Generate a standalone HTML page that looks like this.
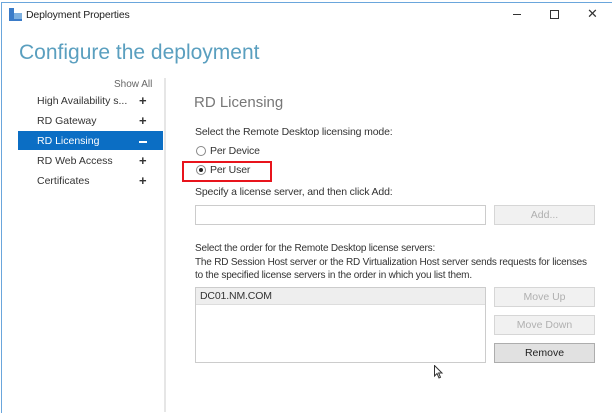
<!DOCTYPE html>
<html><head><meta charset="utf-8"><style>
body{margin:0;width:612px;height:416px;background:#fff;font-family:"Liberation Sans",sans-serif;overflow:hidden;position:relative;color:#333}
.a{position:absolute;white-space:nowrap}
.t{font-size:10.5px;letter-spacing:-0.15px}
.btn{position:absolute;width:99px;height:18px;border:1px solid #d6d6d6;background:#f1f1f1;color:#b0b0b0;font-size:10.5px;text-align:center;line-height:18px}
.nav{font-size:10.5px;color:#333}
</style></head><body>
<div class="a" style="left:1px;top:2px;width:611px;height:410px;border-left:1px solid #6aa6dc;border-top:1px solid #6aa6dc"></div>
<svg class="a" style="left:9px;top:8px" width="14" height="13"><rect x="0" y="0" width="5" height="11" fill="#3a7bc8"/><rect x="5" y="5" width="8" height="6" fill="#7db0e0"/><rect x="0" y="11" width="13" height="2" fill="#3a7bc8"/></svg>
<div class="a t" style="left:26px;top:9px;color:#222">Deployment Properties</div>
<div class="a" style="left:513px;top:14px;width:8px;height:1px;background:#333"></div>
<div class="a" style="left:550px;top:10px;width:7px;height:7px;border:1px solid #333"></div>
<div class="a" style="left:587px;top:6px;font-size:13px;color:#333">✕</div>
<div class="a" style="left:19px;top:41px;font-size:21px;color:#5a9fbf">Configure the deployment</div>
<div class="a" style="left:164px;top:78px;width:2px;height:334px;background:#e6e6e6"></div>
<div class="a" style="left:114px;top:79px;font-size:10px;color:#666">Show All</div>
<div class="a" style="left:18px;top:131px;width:145px;height:19px;background:#0b6ec4"></div>
<div class="a nav" style="left:37px;top:95px">High Availability s...</div><div class="a nav" style="left:139px;top:93px;font-size:13px;font-weight:bold">+</div>
<div class="a nav" style="left:37px;top:115px">RD Gateway</div><div class="a nav" style="left:139px;top:113px;font-size:13px;font-weight:bold">+</div>
<div class="a nav" style="left:37px;top:135px;color:#fff">RD Licensing</div><div class="a" style="left:139px;top:141px;width:8px;height:2px;background:#fff"></div>
<div class="a nav" style="left:37px;top:155px">RD Web Access</div><div class="a nav" style="left:139px;top:153px;font-size:13px;font-weight:bold">+</div>
<div class="a nav" style="left:37px;top:175px">Certificates</div><div class="a nav" style="left:139px;top:173px;font-size:13px;font-weight:bold">+</div>
<div class="a" style="left:194px;top:94px;font-size:15px;color:#777">RD Licensing</div>
<div class="a t" style="left:195px;top:126px">Select the Remote Desktop licensing mode:</div>
<div class="a" style="left:196px;top:146px;width:8px;height:8px;border:1px solid #888;border-radius:50%"></div>
<div class="a t" style="left:210px;top:145px">Per Device</div>
<div class="a" style="left:196px;top:165px;width:8px;height:8px;border:1px solid #888;border-radius:50%"></div>
<div class="a" style="left:199px;top:168px;width:4px;height:4px;background:#222;border-radius:50%"></div>
<div class="a t" style="left:210px;top:164px">Per User</div>
<div class="a" style="left:182px;top:161px;width:86px;height:17px;border:2px solid #e8141c"></div>
<div class="a t" style="left:195px;top:186px">Specify a license server, and then click Add:</div>
<div class="a" style="left:195px;top:205px;width:289px;height:18px;border:1px solid #ccc"></div>
<div class="btn" style="left:494px;top:205px">Add...</div>
<div class="a t" style="left:195px;top:242px;line-height:13.5px;font-size:10px;letter-spacing:-0.2px">Select the order for the Remote Desktop license servers:<br>The RD Session Host server or the RD Virtualization Host server sends requests for licenses<br>to the specified license servers in the order in which you list them.</div>
<div class="a" style="left:195px;top:287px;width:289px;height:74px;border:1px solid #ccc"></div>
<div class="a" style="left:196px;top:288px;width:289px;height:16px;background:#eee;border-bottom:1px solid #ddd"></div>
<div class="a t" style="left:200px;top:290px">DC01.NM.COM</div>
<div class="btn" style="left:494px;top:287px">Move Up</div>
<div class="btn" style="left:494px;top:315px">Move Down</div>
<div class="btn" style="left:494px;top:343px;background:#e1e1e1;border-color:#adadad;color:#222">Remove</div>
<svg class="a" style="left:434px;top:365px" width="10" height="14"><path d="M0.5 0.5 L0.5 11 L3 8.5 L5 13 L6.5 12.3 L4.6 8 L8 8 Z" fill="#fff" stroke="#333"/></svg>
</body></html>
